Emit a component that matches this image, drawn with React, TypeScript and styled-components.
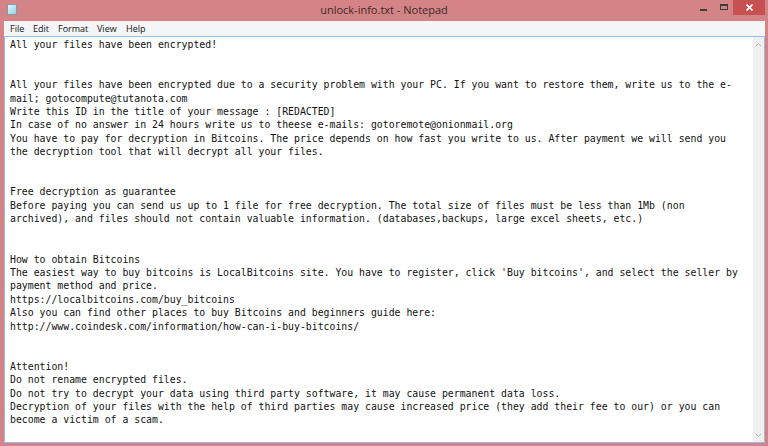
import React from 'react'
import styled, {createGlobalStyle} from 'styled-components'

const GlobalStyle = createGlobalStyle`
    html, body {
        margin: 0;
        padding: 0;
        width: 768px;
        height: 446px;
        overflow: hidden;
        background: #d48386;
    }
`

const Window = styled.div`
    width: 768px;
    height: 446px;
    display: flex;
    flex-direction: column;
    background: #d48386;
    box-sizing: border-box;
    padding: 0 3px 3px 4px;
`

const TitleBar = styled.div`
    height: 21px;
    display: grid;
    grid-template-columns: 1fr auto 1fr;
    align-items: start;
    margin: 0 -3px 0 -4px;
`

const IconSlot = styled.div`
    padding: 4px 0 0 7px;
    display: flex;
`

const Title = styled.div`
    font-family: 'Open Sans', 'Noto Sans', sans-serif;
    font-size: 11px;
    line-height: 20px;
    color: #3a2a2b;
    white-space: nowrap;
`

const Controls = styled.div`
    display: flex;
    justify-content: flex-end;
    padding-right: 3px;
`

const CaptionButton = styled.div<{$w: number; $close?: boolean}>`
    width: ${p => p.$w}px;
    height: 15px;
    display: flex;
    align-items: center;
    justify-content: center;
    background: ${p => (p.$close ? '#c75050' : 'transparent')};
`

const MenuBar = styled.div`
    height: 15px;
    display: flex;
    align-items: center;
    background: #f4f5f7;
    padding-left: 6px;
`

const MenuItem = styled.span<{$w: number}>`
    width: ${p => p.$w}px;
    font-family: 'Open Sans', 'Noto Sans', sans-serif;
    font-size: 9px;
    color: #111;
`

const Editor = styled.div`
    flex: 1;
    display: flex;
    border: 1px solid #92bfe9;
    background: #fff;
    min-height: 0;
`

const Text = styled.pre`
    flex: 1;
    margin: 0;
    padding: 1px 0 0 5px;
    font-family: 'DejaVu Sans Mono', 'Liberation Mono', monospace;
    font-size: 9.84px;
    line-height: 13.4px;
    color: #111;
    white-space: pre;
    overflow: hidden;
`

const ScrollBar = styled.div`
    width: 11px;
    background: #f0f0f0;
    display: flex;
    flex-direction: column;
    justify-content: space-between;
    align-items: center;
    padding: 6px 0 5px;
`

const NOTE = `All your files have been encrypted!


All your files have been encrypted due to a security problem with your PC. If you want to restore them, write us to the e-
mail; gotocompute@tutanota.com
Write this ID in the title of your message : [REDACTED]
In case of no answer in 24 hours write us to theese e-mails: gotoremote@onionmail.org
You have to pay for decryption in Bitcoins. The price depends on how fast you write to us. After payment we will send you
the decryption tool that will decrypt all your files.


Free decryption as guarantee
Before paying you can send us up to 1 file for free decryption. The total size of files must be less than 1Mb (non
archived), and files should not contain valuable information. (databases,backups, large excel sheets, etc.)


How to obtain Bitcoins
The easiest way to buy bitcoins is LocalBitcoins site. You have to register, click 'Buy bitcoins', and select the seller by
payment method and price.
https://localbitcoins.com/buy_bitcoins
Also you can find other places to buy Bitcoins and beginners guide here:
http://www.coindesk.com/information/how-can-i-buy-bitcoins/


Attention!
Do not rename encrypted files.
Do not try to decrypt your data using third party software, it may cause permanent data loss.
Decryption of your files with the help of third parties may cause increased price (they add their fee to our) or you can
become a victim of a scam.`

const NotepadIcon = () => (
    <svg width='10' height='11' viewBox='0 0 10 11'>
        <defs>
            <linearGradient id='np' x1='0' y1='0' x2='1' y2='1'>
                <stop offset='0' stopColor='#e4f6fb' />
                <stop offset='1' stopColor='#8fd0e4' />
            </linearGradient>
        </defs>
        <rect x='0.5' y='0.5' width='9' height='10' fill='url(#np)' stroke='#8a9aa2' />
    </svg>
)

const Chevron = ({up}: {up?: boolean}) => (
    <svg width='7' height='4' viewBox='0 0 7 4'>
        <path
            d={up ? 'M0.5 3.5 L3.5 0.5 L6.5 3.5' : 'M0.5 0.5 L3.5 3.5 L6.5 0.5'}
            fill='none'
            stroke='#b4b4b4'
        />
    </svg>
)

const App = () => (
    <>
        <GlobalStyle />
        <Window>
            <TitleBar>
                <IconSlot>
                    <NotepadIcon />
                </IconSlot>
                <Title>unlock-info.txt - Notepad</Title>
                <Controls>
                    <CaptionButton $w={22}>
                        <svg width='7' height='2' viewBox='0 0 7 2' style={{marginTop: 4}}>
                            <rect width='7' height='2' fill='#3b3b3b' />
                        </svg>
                    </CaptionButton>
                    <CaptionButton $w={19}>
                        <svg width='8' height='6' viewBox='0 0 8 6' style={{marginTop: -2}}>
                            <rect x='0.5' y='0.5' width='7' height='5' fill='none' stroke='#3b3b3b' />
                            <rect x='0' y='0' width='8' height='2' fill='#3b3b3b' />
                        </svg>
                    </CaptionButton>
                    <CaptionButton $w={32} $close>
                        <svg width='7' height='7' viewBox='0 0 7 7'>
                            <path d='M0.5 0.5 L6.5 6.5 M6.5 0.5 L0.5 6.5' stroke='#fff' strokeWidth='1.6' />
                        </svg>
                    </CaptionButton>
                </Controls>
            </TitleBar>
            <MenuBar>
                <MenuItem $w={23}>File</MenuItem>
                <MenuItem $w={25}>Edit</MenuItem>
                <MenuItem $w={39}>Format</MenuItem>
                <MenuItem $w={29}>View</MenuItem>
                <MenuItem $w={30}>Help</MenuItem>
            </MenuBar>
            <Editor>
                <Text>{NOTE}</Text>
                <ScrollBar>
                    <Chevron up />
                    <Chevron />
                </ScrollBar>
            </Editor>
        </Window>
    </>
)

export default App
